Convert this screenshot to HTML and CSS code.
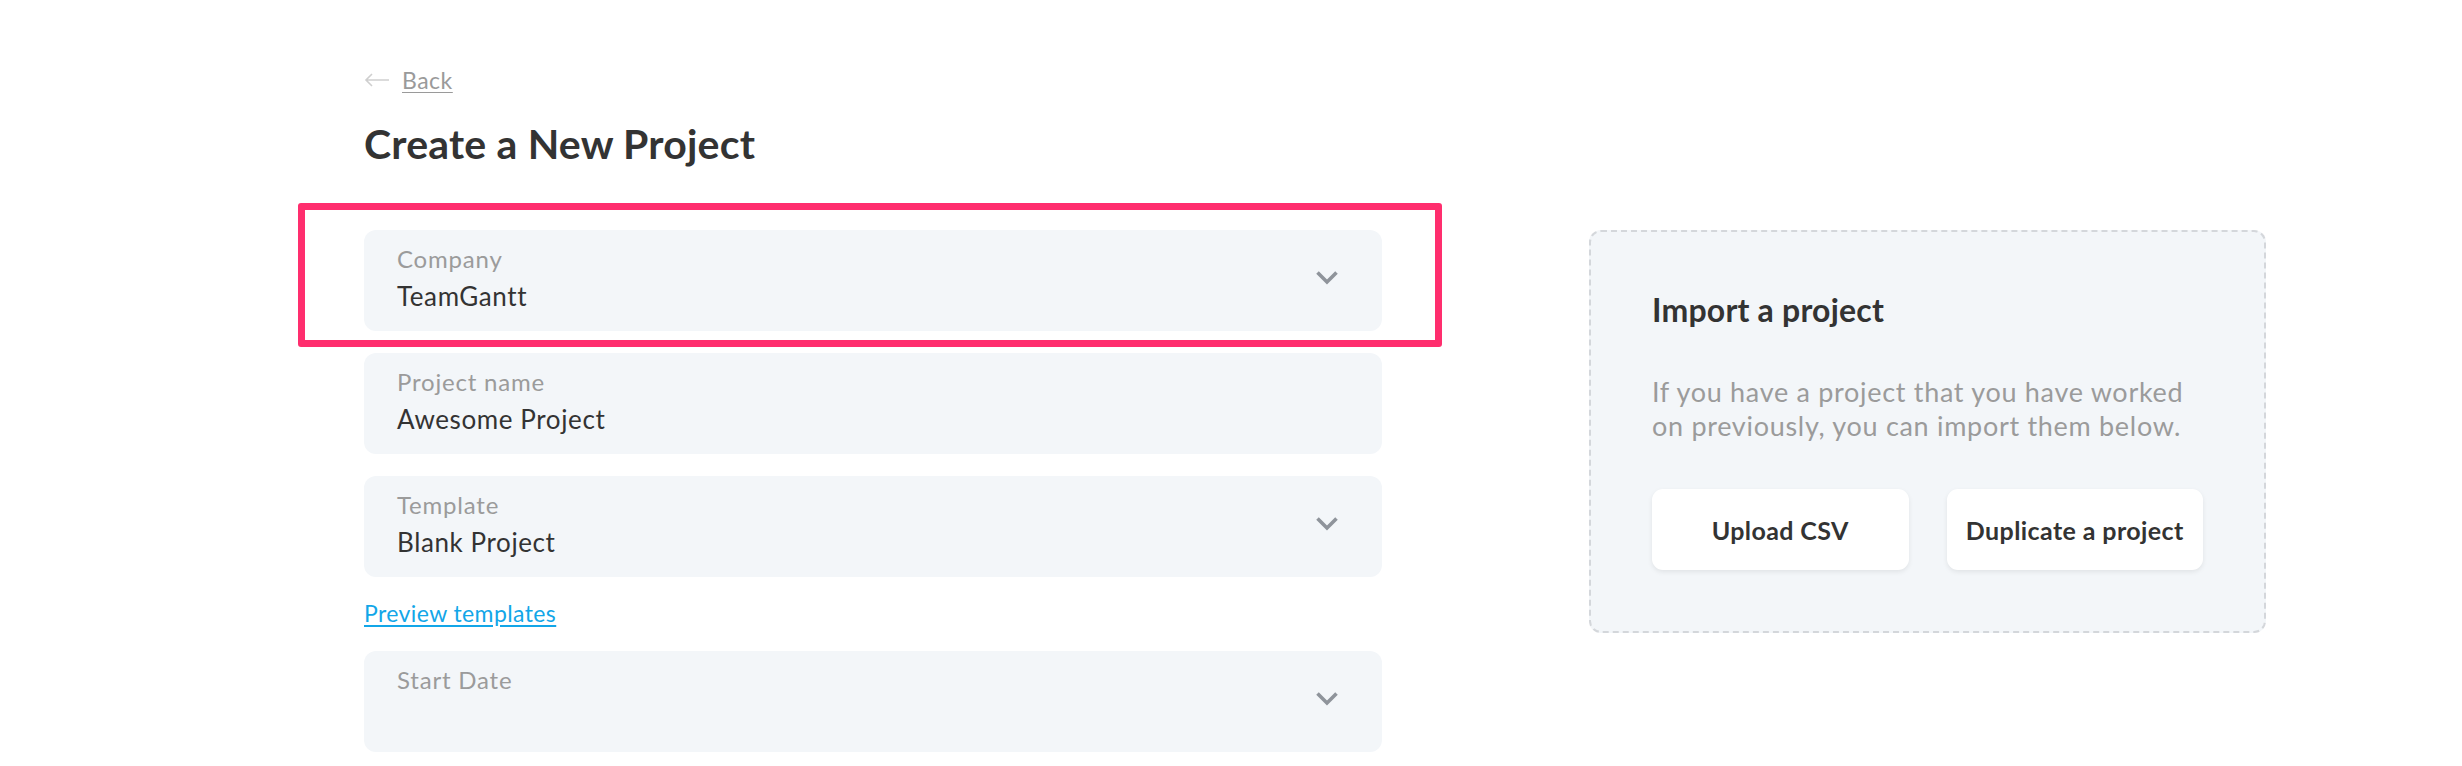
FILE: index.html
```html
<!DOCTYPE html>
<html lang="en">
<head>
<meta charset="utf-8">
<title>Create a New Project</title>
<link rel="stylesheet" href="styles.css">
</head>
<body>
<div class="page">
  <a class="back" href="#">
    <svg class="back-arrow" width="26" height="14" viewBox="0 0 26 14"><path d="M25 7H2M8 1L2 7l6 6" fill="none" stroke="#cfcfcf" stroke-width="1.6"/></svg>
    <span class="back-text">Back</span>
  </a>
  <h1 class="title">Create a New Project</h1>
  <div class="content">
    <div class="form">
      <div class="field select highlighted">
        <div class="field-text">
          <div class="label">Company</div>
          <div class="value">TeamGantt</div>
        </div>
        <svg class="chev" width="24" height="15" viewBox="0 0 24 15"><path d="M2.5 2.5l9.5 9.5 9.5-9.5" fill="none" stroke="#8f949b" stroke-width="3.6"/></svg>
        <div class="highlight"></div>
      </div>
      <div class="field">
        <div class="field-text">
          <div class="label">Project name</div>
          <div class="value">Awesome Project</div>
        </div>
      </div>
      <div class="field select">
        <div class="field-text">
          <div class="label">Template</div>
          <div class="value">Blank Project</div>
        </div>
        <svg class="chev" width="24" height="15" viewBox="0 0 24 15"><path d="M2.5 2.5l9.5 9.5 9.5-9.5" fill="none" stroke="#8f949b" stroke-width="3.6"/></svg>
      </div>
      <a class="preview" href="#">Preview templates</a>
      <div class="field select">
        <div class="field-text">
          <div class="label">Start Date</div>
          <div class="value"></div>
        </div>
        <svg class="chev" width="24" height="15" viewBox="0 0 24 15"><path d="M2.5 2.5l9.5 9.5 9.5-9.5" fill="none" stroke="#8f949b" stroke-width="3.6"/></svg>
      </div>
    </div>
    <div class="import">
      <h2 class="import-title">Import a project</h2>
      <p class="import-text">If you have a project that you have worked on previously, you can import them below.</p>
      <div class="import-buttons">
        <button class="btn">Upload CSV</button>
        <button class="btn">Duplicate a project</button>
      </div>
    </div>
  </div>
</div>
</body>
</html>
```

FILE: styles.css
```css
* { box-sizing: border-box; }
html, body { margin: 0; padding: 0; background: #ffffff; }
body {
  font-family: "Lato", "Open Sans", sans-serif;
  color: #333333;
}
.page {
  padding: 66px 0 0 364px;
}
.back {
  display: flex;
  align-items: center;
  gap: 12px;
  height: 28px;
  text-decoration: none;
  width: max-content;
}
.back-text {
  font-size: 23px;
  line-height: 28px;
  letter-spacing: 0.5px;
  color: #9a9a9a;
  text-decoration: underline;
  text-underline-offset: 3px;
  text-decoration-thickness: 1px;
}
.title {
  margin: 26px 0 0;
  font-size: 41px;
  line-height: 48px;
  font-weight: 700;
  color: #333333;
  letter-spacing: 0.2px;
}
.content {
  margin-top: 62px;
  display: flex;
  align-items: flex-start;
  gap: 207px;
}
.form {
  width: 1018px;
  display: flex;
  flex-direction: column;
}
.field {
  position: relative;
  height: 101px;
  background: #f3f6f9;
  border-radius: 12px;
  padding: 15px 32px 22px 33px;
  display: flex;
  align-items: flex-start;
  justify-content: space-between;
  margin-bottom: 22px;
}
.field-text {
  display: flex;
  flex-direction: column;
  gap: 8px;
}
.label {
  font-size: 24px;
  line-height: 28px;
  letter-spacing: 0.8px;
  color: #9b9b9b;
}
.value {
  font-size: 26px;
  line-height: 30px;
  height: 30px;
  letter-spacing: 0.6px;
  color: #333333;
}
.chev {
  align-self: center;
  margin-right: 11px;
}
.highlight {
  position: absolute;
  left: -66px;
  top: -27px;
  right: -60px;
  bottom: -16px;
  border: 7px solid #ff2e6e;
  border-radius: 3px;
  pointer-events: none;
}
.preview {
  font-size: 23px;
  line-height: 28px;
  letter-spacing: 0.4px;
  color: #12a6e8;
  text-decoration: underline;
  text-underline-offset: 3px;
  width: max-content;
  margin: 0 0 24px;
}
.import {
  width: 677px;
  height: 403px;
  background: #f3f6f9;
  border: 2px dashed #d4d7db;
  border-radius: 12px;
  padding: 60px 61px 0;
}
.import-title {
  margin: 0;
  font-size: 32px;
  line-height: 36px;
  font-weight: 700;
  letter-spacing: 0.2px;
  color: #333333;
}
.import-text {
  margin: 47px 0 0;
  font-size: 27px;
  line-height: 34px;
  letter-spacing: 0.7px;
  color: #9b9b9b;
}
.import-buttons {
  margin-top: 46px;
  display: flex;
  gap: 38px;
}
.btn {
  flex: 1;
  height: 81px;
  background: #ffffff;
  border: none;
  border-radius: 11px;
  box-shadow: 0 2px 5px rgba(0, 0, 0, 0.08);
  font-family: "Lato", "Open Sans", sans-serif;
  font-size: 25px;
  font-weight: 700;
  letter-spacing: 0.4px;
  color: #333333;
  cursor: pointer;
}
```
